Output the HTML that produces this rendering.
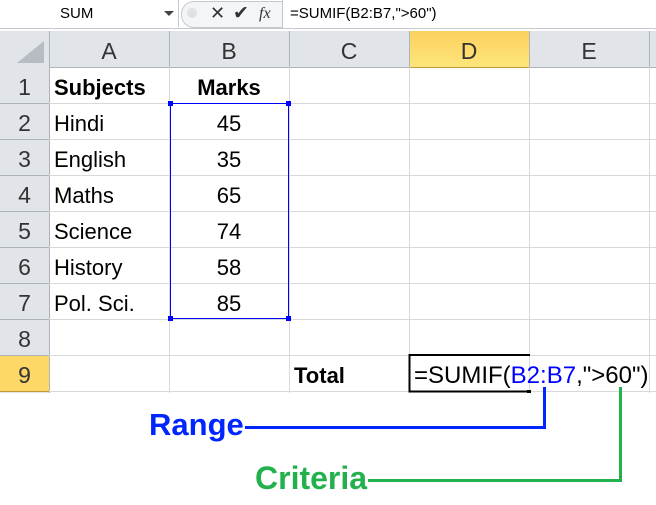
<!DOCTYPE html>
<html><head><style>
body{margin:0;width:656px;height:505px;background:#fff;position:relative;overflow:hidden;font-family:"Liberation Sans",sans-serif}
.a{position:absolute}
.t{position:absolute;font-size:22px;color:#000;line-height:36px;white-space:nowrap;margin-top:3px}
.h{position:absolute;font-size:23px;color:#333;text-align:center;line-height:36px;margin-top:2px}
</style></head><body>
<!-- formula bar -->
<div class="a" style="left:0;top:0;width:656px;height:28px;background:#fff;border-bottom:1px solid #c5c9cf"></div>
<div class="a" style="left:0;top:0;width:178px;height:27px;border-right:1px solid #c5c9cf"></div>
<div class="t" style="left:60px;top:0;line-height:27px;font-size:15px;margin-top:0">SUM</div>
<div class="a" style="left:164px;top:11px;width:0;height:0;border-left:5px solid transparent;border-right:5px solid transparent;border-top:5px solid #444"></div>
<div class="a" style="left:181px;top:1px;width:100px;height:25px;border:1px solid #c5c9cf;border-radius:13px 0 0 13px;background:#f4f5f7"></div>
<div class="a" style="left:187px;top:8px;width:10px;height:10px;border-radius:5px;background:#dfe1e4"></div>
<div class="t" style="left:210px;top:0;line-height:27px;font-size:18px;color:#333;margin-top:0">✕</div>
<div class="t" style="left:233px;top:0;line-height:27px;font-size:19px;color:#333;margin-top:0">✔</div>
<div class="t" style="left:259px;top:0;line-height:27px;font-size:16px;font-style:italic;font-family:'Liberation Serif',serif;color:#333;margin-top:0">fx</div>
<div class="a" style="left:282px;top:0;width:1px;height:27px;background:#c5c9cf"></div>
<div class="t" style="left:290px;top:0;line-height:27px;font-size:15px;margin-top:0">=SUMIF(B2:B7,"&gt;60")</div>
<!-- header row -->
<div class="a" style="left:0;top:31px;width:656px;height:36px;background:#e1e4e9;border-bottom:1px solid #aeb3bb"></div>
<div class="a" style="left:0;top:31px;width:49px;height:362px;background:#e1e4e9;border-right:1px solid #aeb3bb"></div>
<div class="a" style="left:17px;top:41px;width:0;height:0;border-left:27px solid transparent;border-bottom:22px solid #b7bcc3"></div>
<div class="a" style="left:409px;top:31px;width:120px;height:36px;background:linear-gradient(#fcd15e,#fde57a);border-bottom:1px solid #c29a3e"></div>
<div class="a" style="left:0;top:355px;width:49px;height:36px;background:#fdd866;border-bottom:1px solid #c29a3e"></div>
<div class="h" style="left:49px;top:31px;width:120px">A</div>
<div class="h" style="left:169px;top:31px;width:120px">B</div>
<div class="h" style="left:289px;top:31px;width:120px">C</div>
<div class="h" style="left:409px;top:31px;width:120px">D</div>
<div class="h" style="left:529px;top:31px;width:120px">E</div>
<!-- gridlines -->
<svg class="a" style="left:0;top:0" width="656" height="505">
<g stroke="#aeb3bb" stroke-width="1">
<line x1="169.5" y1="31" x2="169.5" y2="67"/><line x1="289.5" y1="31" x2="289.5" y2="67"/><line x1="409.5" y1="31" x2="409.5" y2="67"/><line x1="529.5" y1="31" x2="529.5" y2="67"/><line x1="649.5" y1="31" x2="649.5" y2="67"/>
<line x1="0" y1="103.5" x2="49" y2="103.5"/><line x1="0" y1="139.5" x2="49" y2="139.5"/><line x1="0" y1="175.5" x2="49" y2="175.5"/><line x1="0" y1="211.5" x2="49" y2="211.5"/><line x1="0" y1="247.5" x2="49" y2="247.5"/><line x1="0" y1="283.5" x2="49" y2="283.5"/><line x1="0" y1="319.5" x2="49" y2="319.5"/><line x1="0" y1="355.5" x2="49" y2="355.5"/>
</g>
<g stroke="#d9d9d9" stroke-width="1">
<line x1="169.5" y1="67" x2="169.5" y2="393"/><line x1="289.5" y1="67" x2="289.5" y2="393"/><line x1="409.5" y1="67" x2="409.5" y2="393"/><line x1="529.5" y1="67" x2="529.5" y2="393"/><line x1="649.5" y1="67" x2="649.5" y2="393"/>
<line x1="49" y1="103.5" x2="656" y2="103.5"/><line x1="49" y1="139.5" x2="656" y2="139.5"/><line x1="49" y1="175.5" x2="656" y2="175.5"/><line x1="49" y1="211.5" x2="656" y2="211.5"/><line x1="49" y1="247.5" x2="656" y2="247.5"/><line x1="49" y1="283.5" x2="656" y2="283.5"/><line x1="49" y1="319.5" x2="656" y2="319.5"/><line x1="49" y1="355.5" x2="656" y2="355.5"/><line x1="49" y1="391.5" x2="656" y2="391.5"/>
</g>
<rect x="170.5" y="103.5" width="118" height="215" fill="none" stroke="#0000ff" stroke-width="1"/>
<rect x="168" y="101" width="5" height="5" fill="#0000ff"/><rect x="286" y="101" width="5" height="5" fill="#0000ff"/>
<rect x="168" y="316" width="5" height="5" fill="#0000ff"/><rect x="286" y="316" width="5" height="5" fill="#0000ff"/>
<path d="M530 355 H409.5 V391.5 H530" fill="none" stroke="#000" stroke-width="2"/>
<rect x="527" y="390" width="4" height="3" fill="#000"/>
<path d="M245 427.5 H544.5 V387" fill="none" stroke="#0026ff" stroke-width="3"/>
<path d="M368 480.5 H620.5 V387" fill="none" stroke="#22b14c" stroke-width="3"/>
</svg>
<!-- row headers -->
<div class="h" style="left:0;top:67px;width:49px">1</div>
<div class="h" style="left:0;top:103px;width:49px">2</div>
<div class="h" style="left:0;top:139px;width:49px">3</div>
<div class="h" style="left:0;top:175px;width:49px">4</div>
<div class="h" style="left:0;top:211px;width:49px">5</div>
<div class="h" style="left:0;top:247px;width:49px">6</div>
<div class="h" style="left:0;top:283px;width:49px">7</div>
<div class="h" style="left:0;top:319px;width:49px">8</div>
<div class="h" style="left:0;top:355px;width:49px">9</div>
<!-- data -->
<div class="t" style="left:54px;top:67px;font-weight:bold">Subjects</div>
<div class="t" style="left:169px;top:67px;width:120px;text-align:center;font-weight:bold">Marks</div>
<div class="t" style="left:54px;top:103px">Hindi</div>
<div class="t" style="left:54px;top:139px">English</div>
<div class="t" style="left:54px;top:175px">Maths</div>
<div class="t" style="left:54px;top:211px">Science</div>
<div class="t" style="left:54px;top:247px">History</div>
<div class="t" style="left:54px;top:283px">Pol. Sci.</div>
<div class="t" style="left:169px;top:103px;width:120px;text-align:center">45</div>
<div class="t" style="left:169px;top:139px;width:120px;text-align:center">35</div>
<div class="t" style="left:169px;top:175px;width:120px;text-align:center">65</div>
<div class="t" style="left:169px;top:211px;width:120px;text-align:center">74</div>
<div class="t" style="left:169px;top:247px;width:120px;text-align:center">58</div>
<div class="t" style="left:169px;top:283px;width:120px;text-align:center">85</div>
<div class="t" style="left:294px;top:355px;font-weight:bold">Total</div>
<div class="t" style="left:414px;top:355px;font-size:24px">=SUMIF(<span style="color:#0000ff">B2:B7</span>,"&gt;60")</div>
<div class="t" style="left:149px;top:407px;font-size:31px;font-weight:bold;color:#0026ff;margin-top:0">Range</div>
<div class="t" style="left:255px;top:460px;font-size:32px;font-weight:bold;color:#22b14c;margin-top:0">Criteria</div>
</body></html>
